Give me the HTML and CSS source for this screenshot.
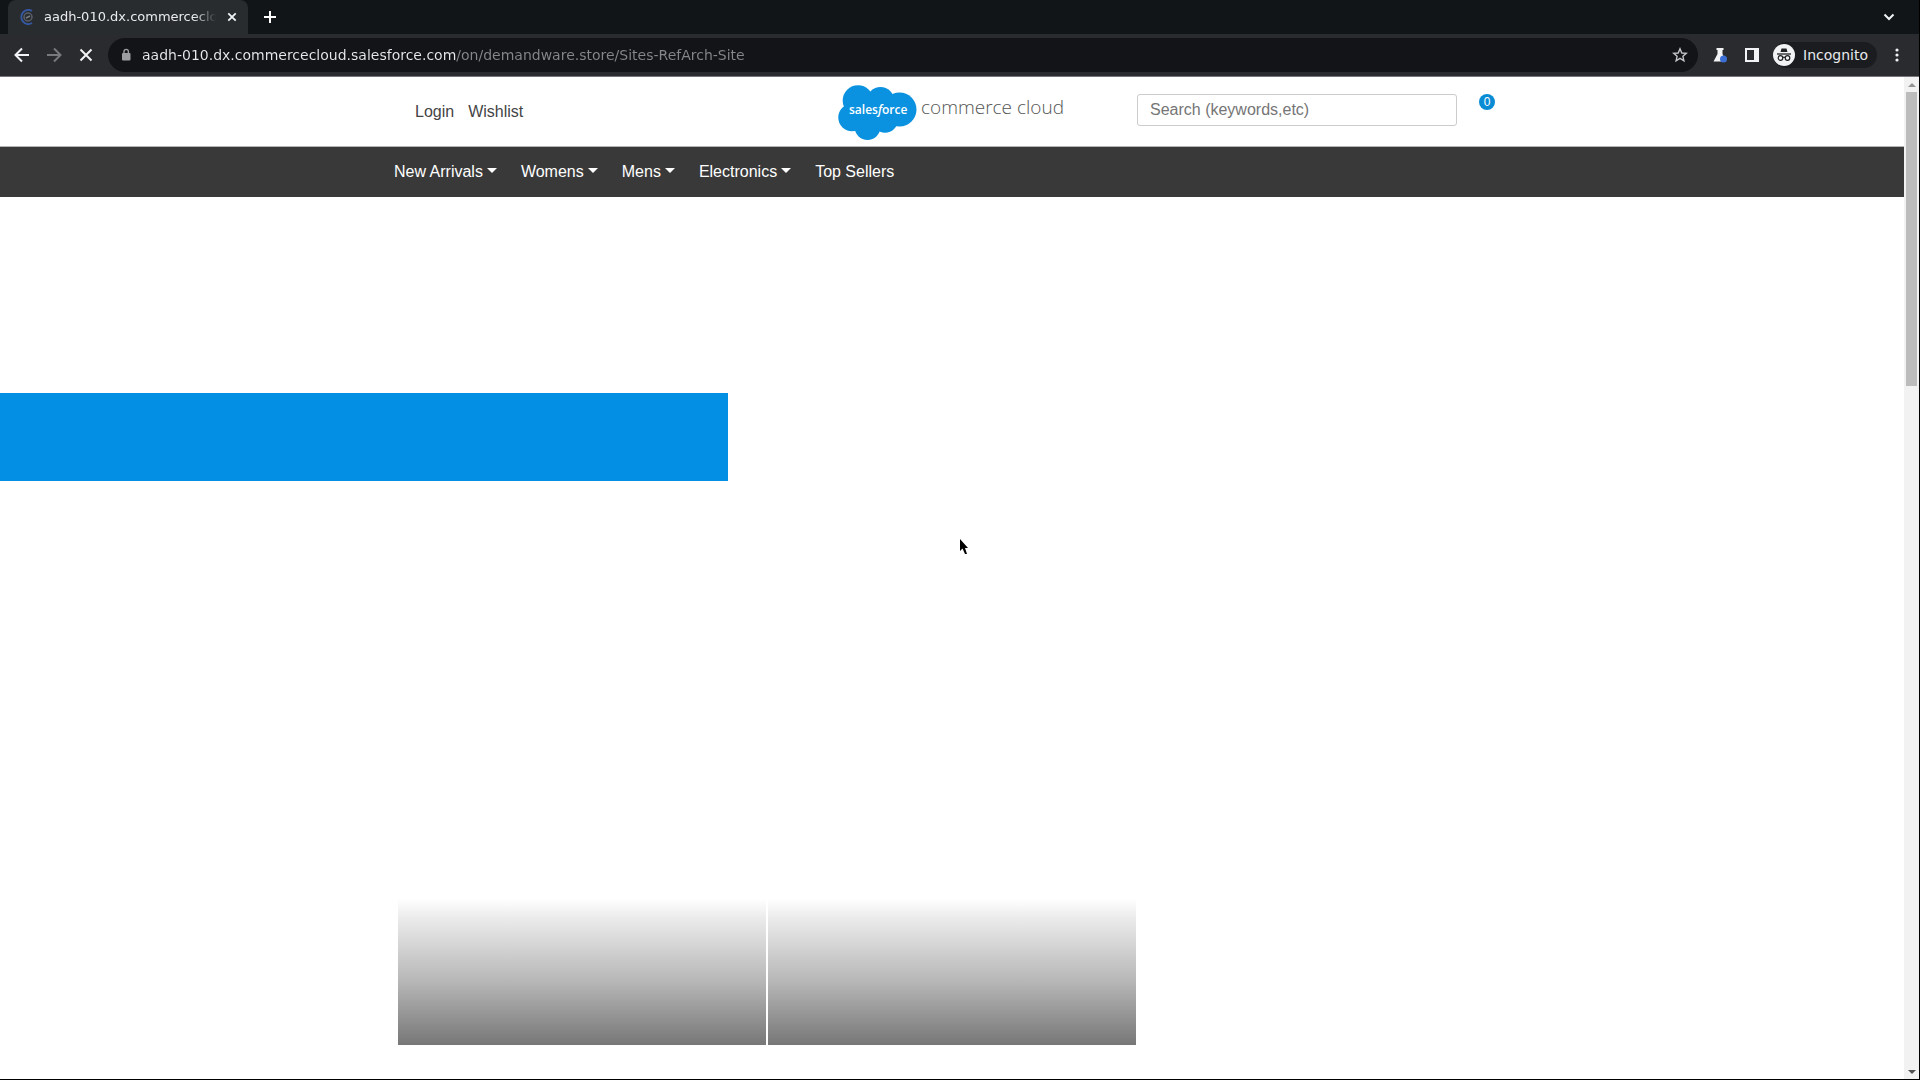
FILE: index.html
```
<!DOCTYPE html>
<html lang="en">
<head>
<meta charset="utf-8">
<title>Sites-RefArch-Site</title>
<link rel="stylesheet" href="styles.css">
</head>
<body>
<div class="window">
  <div class="tabstrip">
    <div class="tab">
      <svg class="favicon" width="16" height="16" viewBox="0 0 16 16" fill="none"><path d="M12 2A7 7 0 1 0 12 14" stroke="#3458a4" stroke-width="2"/><circle cx="8" cy="8" r="4" stroke="#5b6069" stroke-width="1.5"/><path d="M6 9L10 7" stroke="#777b82" stroke-width="1.5"/></svg>
      <span class="tab-title">aadh-010.dx.commercecloud</span>
      <button class="icon-button" aria-label="Close tab"><svg width="16" height="16" viewBox="0 0 16 16"><path d="M4.300 4.300L11.700 11.700M11.700 4.300L4.300 11.700" stroke="#f1f3f4" stroke-width="1.8"/></svg></button>
    </div>
    <button class="icon-button" aria-label="New tab"><svg width="16" height="16" viewBox="0 0 16 16"><path d="M8 2V14M2 8H14" stroke="#fff" stroke-width="2"/></svg></button>
    <button class="icon-button tab-search" aria-label="Search tabs"><svg width="16" height="16" viewBox="0 0 16 16"><path d="M3.500 5.500L8 10L12.500 5.500" fill="none" stroke="#f1f3f4" stroke-width="2"/></svg></button>
  </div>
  <div class="toolbar">
    <button class="icon-button" aria-label="Back"><svg width="16" height="16" viewBox="0 0 16 16"><path d="M15 8H2M8 1.500L1.500 8L8 14.500" fill="none" stroke="#f1f3f4" stroke-width="2"/></svg></button>
    <button class="icon-button" aria-label="Forward"><svg width="16" height="16" viewBox="0 0 16 16"><path d="M1 8H14M8 1.500L14.500 8L8 14.500" fill="none" stroke="#77797c" stroke-width="2"/></svg></button>
    <button class="icon-button" aria-label="Stop"><svg width="16" height="16" viewBox="0 0 16 16"><path d="M2.500 2.500L13.500 13.500M13.500 2.500L2.500 13.500" stroke="#f1f3f4" stroke-width="2"/></svg></button>
    <div class="address">
      <svg width="12" height="14" viewBox="0 0 12 14"><rect x="2" y="5" width="8.500" height="7.500" rx="1" fill="#9c9da0"/><path d="M4 6V3.600A2.200 2.200 0 0 1 8.400 3.600V6" fill="none" stroke="#9c9da0" stroke-width="1.400"/></svg>
      <input class="url" type="text" aria-label="Address" value="aadh-010.dx.commercecloud.salesforce.com/on/demandware.store/Sites-RefArch-Site">
      <button class="icon-button" aria-label="Bookmark"><svg width="16" height="16" viewBox="0 0 16 16"><path d="M8 1.800L9.800 6L14.300 6.400L10.900 9.300L11.900 13.800L8 11.400L4.100 13.800L5.100 9.300L1.700 6.400L6.200 6Z" fill="none" stroke="#c3c5c8" stroke-width="1.400"/></svg></button>
    </div>
    <button class="icon-button" aria-label="Labs"><svg width="16" height="16" viewBox="0 0 16 16"><path d="M4.500 1H11.500V3H10.500V7L14 14.500H1.500L5.500 7V3H4.500Z" fill="#f1f3f4"/><circle cx="11.500" cy="12" r="3.500" fill="#3b6fd6"/></svg></button>
    <button class="icon-button" aria-label="Side panel"><svg width="16" height="16" viewBox="0 0 16 16"><path fill-rule="evenodd" d="M1 1H15V15H1ZM3 3V13H10V3Z" fill="#f1f3f4"/></svg></button>
    <button class="incognito"><svg width="22" height="22" viewBox="0 0 22 22"><circle cx="11" cy="11" r="11" fill="#f1f3f4"/><path d="M7.500 8L8.500 4.500H13.500L14.500 8Z" fill="#202124"/><path d="M4 10H18" stroke="#202124" stroke-width="1.300"/><g fill="none" stroke="#202124" stroke-width="1.200"><circle cx="7.500" cy="14" r="2.300"/><circle cx="14.500" cy="14" r="2.300"/><path d="M9.800 13.500Q11 12.800 12.200 13.500"/></g></svg>Incognito</button>
    <button class="icon-button" aria-label="Menu"><svg width="16" height="16" viewBox="0 0 16 16" fill="#f1f3f4"><circle cx="8" cy="3" r="1.600"/><circle cx="8" cy="8" r="1.600"/><circle cx="8" cy="13" r="1.600"/></svg></button>
  </div>
  <div class="viewport">
    <div class="page">
      <header class="site-header">
        <div class="container header-row">
          <div class="account"><a href="#login">Login</a><a href="#wishlist">Wishlist</a></div>
          <a class="logo" href="#home" aria-label="Salesforce commerce cloud">
            <svg width="228" height="56" viewBox="0 0 228 56">
              <g fill="#0a92e0"><circle cx="20" cy="15.500" r="15.300"/><circle cx="42.500" cy="15.800" r="13.700"/><circle cx="61.500" cy="24.500" r="17"/><circle cx="14" cy="32.500" r="13.700"/><circle cx="29.500" cy="42.300" r="12.800"/><circle cx="47" cy="35" r="12.800"/><rect x="12" y="15" width="46" height="25"/></g>
              <text class="logo-name" x="11" y="29">sales<tspan class="logo-f">f</tspan>orce</text>
              <text class="logo-product" x="83" y="29">commerce cloud</text>
            </svg>
          </a>
          <div class="tools">
            <input class="search" type="text" placeholder="Search (keywords,etc)" aria-label="Search">
            <a class="cart" href="#cart" aria-label="Cart, 0 items">0</a>
          </div>
        </div>
      </header>
      <nav class="site-nav">
        <div class="container nav-row">
          <a class="has-menu" href="#new">New Arrivals</a>
          <a class="has-menu" href="#womens">Womens</a>
          <a class="has-menu" href="#mens">Mens</a>
          <a class="has-menu" href="#electronics">Electronics</a>
          <a href="#top">Top Sellers</a>
        </div>
      </nav>
      <main>
        <section class="hero"><div class="hero-banner"></div></section>
        <section class="container tiles"><div class="tile"></div><div class="tile"></div></section>
      </main>
    </div>
    <div class="scrollbar">
      <svg width="12" height="15" viewBox="0 0 12 15"><path d="M2 10L6 6L10 10Z" fill="#939393"/></svg>
      <div class="thumb"></div>
      <svg class="scroll-down" width="12" height="12" viewBox="0 0 12 12"><path d="M2 3L6 7L10 3Z" fill="#505050"/></svg>
    </div>
  </div>
</div>
<svg class="pointer" width="10" height="16" viewBox="0 0 10 16"><path d="M1 0V12L3.500 9.500L6 15H8L6 9H9Z" fill="#000"/></svg>
</body>
</html>
```
FILE: styles.css
```
* { box-sizing: border-box; }
body { margin: 0; background: #000; font-family: "Liberation Sans", Arial, sans-serif; font-size: 16px; line-height: 24px; }
a { color: inherit; text-decoration: none; }
button { border: 0; padding: 0; background: none; font: inherit; color: inherit; }
svg { display: block; flex: none; }

.window { display: flex; flex-direction: column; min-height: 100vh; border: solid #000; border-width: 0 1px 1px 0; }
.icon-button { display: flex; flex: none; }

/* Browser frame */
.tabstrip, .toolbar { display: flex; align-items: center; font-family: "DejaVu Sans", sans-serif; color: #e8eaed; }
.tabstrip { height: 34px; padding: 0 22px 0 8px; gap: 14px; background: #111518; }
.tab { display: flex; align-items: center; width: 240px; height: 34px; padding: 0 8px 0 12px; gap: 8px; border-radius: 8px 8px 0 0; background: #292c2f; font-size: 13px; }
.tab-title { flex: 1; overflow: hidden; white-space: nowrap; mask-image: linear-gradient(to right, #000 150px, transparent 172px); }
.tab-search { margin-left: auto; }
.toolbar { height: 43px; padding: 0 14px; gap: 16px; border-bottom: 1px solid #77767a; background: #2a2b2f; font-size: 14px; }
.address { display: flex; flex: 1; align-items: center; height: 34px; margin-left: -2px; margin-right: -2px; padding: 0 10px 0 12px; gap: 10px; border-radius: 17px; background: #121418; }
.url { flex: 1; min-width: 0; border: 0; padding: 0; outline: 0; font: inherit; color: transparent; background: linear-gradient(to right, #e8eaed 314px, #85878a 314px); background-clip: text; }
.incognito { display: flex; align-items: center; height: 26px; margin-left: -3px; margin-right: -4px; padding-right: 9px; gap: 8px; border-radius: 13px; background: #1b1c20; }

/* Scrolled page */
.viewport { display: flex; flex: 1; background: #fff; }
.page { flex: 1; min-width: 0; }
.scrollbar { display: flex; flex-direction: column; align-items: center; width: 15px; background: #f2f2f2; }
.thumb { width: 11px; height: 294px; background: #bcbcbc; }
.scroll-down { margin-top: auto; }

.container { max-width: 1140px; margin: 0 auto; }
.site-header { border-bottom: 1px solid #b5b5b5; color: #444; }
.header-row { display: grid; grid-template-columns: 1fr auto 1fr; height: 69px; }
.account { display: flex; gap: 14px; padding: 23px 0 0 33px; }
.logo { padding-top: 8px; }
.logo-name { font: 12px "Open Sans", sans-serif; font-weight: 600; fill: #fff; }
.logo-f { font-style: italic; }
.logo-product { font: 19px "Open Sans", sans-serif; font-weight: 300; fill: #555; }
.tools { display: flex; align-items: flex-start; justify-content: flex-end; gap: 22px; padding: 17px 27px 0 0; }
.search { width: 320px; height: 32px; padding: 0 12px; border: 1px solid #ccc; border-radius: 3px; font: inherit; }
.search::placeholder { color: #757575; }
.cart { width: 16px; height: 16px; border-radius: 8px; background: #0a8cd4; color: #fff; font-size: 12px; line-height: 16px; text-align: center; }
.site-nav { background: #393939; color: #fff; }
.nav-row { display: flex; gap: 24px; padding: 13px 12px; }
.has-menu::after { content: ""; display: inline-block; margin-left: 4px; vertical-align: 4px; border: 5px solid transparent; border-top-color: #fff; border-bottom: 0; }

.hero { padding: 196px 0; }
.hero-banner { width: 728px; max-width: 100%; height: 88px; background: #0390e4; }
.tiles { display: grid; grid-template-columns: repeat(3, 1fr); gap: 2px; padding: 0 16px; }
.tile { aspect-ratio: 1; background: linear-gradient(to top, #777 0, #b8b8b8 65px, #ececec 128px, #fff 146px); }

.pointer { position: absolute; left: 959px; top: 539px; }
```
